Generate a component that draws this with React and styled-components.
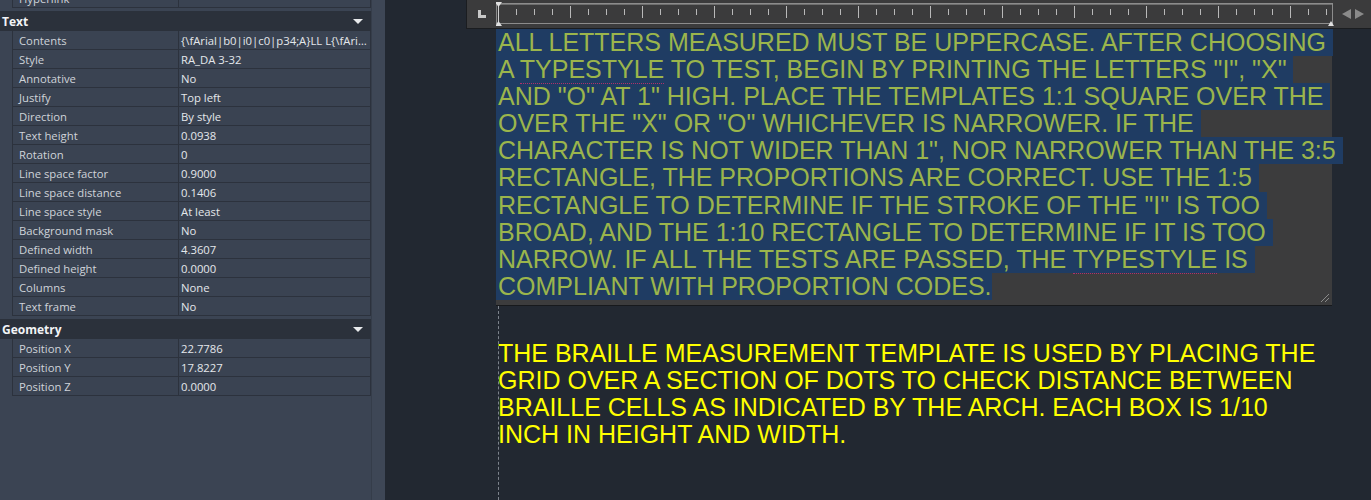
import styled, { createGlobalStyle } from "styled-components";

const Global = createGlobalStyle`
  html, body { margin: 0; padding: 0; background: #222831; }
  body { font-family: "Open Sans", "Noto Sans", sans-serif; }
`;

const Screen = styled.div`
  display: flex;
  width: 1371px;
  height: 500px;
  overflow: hidden;
  background: #222831;
`;

const Palette = styled.div`
  display: flex;
  width: 385px;
  flex-shrink: 0;
  background: #3b4453;
`;

const Grid = styled.div`
  width: 372px;
  margin-top: -11px;
  display: flex;
  flex-direction: column;
`;

const Strip = styled.div`
  width: 13px;
  background: #3e4756;
  border-left: 1px solid #353d4a;
`;

const Header = styled.div`
  display: flex;
  align-items: center;
  justify-content: space-between;
  height: 20px;
  margin-top: 3px;
  padding: 0 8px 0 2px;
  background: #2b313b;
  color: #f2f4f6;
  font-size: 12px;
  font-weight: 700;
`;

const Caret = styled.span`
  width: 0;
  height: 0;
  border-left: 5px solid transparent;
  border-right: 5px solid transparent;
  border-top: 5px solid #e8eaec;
`;

const Rows = styled.div`
  margin-left: 12px;
  border-left: 1px solid #2c323d;
`;

const Row = styled.div`
  display: grid;
  grid-template-columns: 166px 1fr;
  height: 19px;
  border-bottom: 1px solid #2c323d;
  border-right: 1px solid #2c323d;
  box-sizing: border-box;
  background: #3a4352;
  font-size: 11.3px;
  line-height: 16px;
`;

const Name = styled.div`
  padding: 2px 0 0 6px;
  color: #cfd3d9;
  border-right: 1px solid #2c323d;
  white-space: nowrap;
  overflow: hidden;
`;

const Value = styled.div`
  padding: 2px 0 0 2px;
  color: #e4e7eb;
  white-space: nowrap;
  overflow: hidden;
  text-overflow: ellipsis;
`;

const Canvas = styled.div`
  flex: 1;
  padding-left: 81px;
  display: flex;
  flex-direction: column;
`;

const Ruler = styled.div`
  display: flex;
  align-items: center;
  height: 28px;
  background: #3b3b3c;
  border-bottom: 1px solid #1b1d20;
  border-left: 1px solid #1b1d20;
`;

const TabStop = styled.div`
  width: 29px;
  display: flex;
  justify-content: center;
`;

const Arrows = styled.div`
  flex: 1;
  display: flex;
  justify-content: center;
  gap: 1px;
`;

const Editor = styled.div`
  margin-left: 30px;
  width: 836px;
  height: 277px;
  box-sizing: border-box;
  padding: 0 0 0 2px;
  background: #3c3c3d;
  border-bottom: 1px solid #17191c;
  position: relative;
  font-family: "Liberation Sans", Arial, sans-serif;
  font-size: 25px;
  line-height: 27.1px;
  color: #9bb54c;
`;

const Sel = styled.div`
  width: fit-content;
  background: #1f3c63;
  white-space: pre;
  margin-left: -2px;
  padding-left: 2px;
`;

const Misspelt = styled.span`
  border-bottom: 1px dotted #b0306a;
`;

const Grip = styled.svg`
  position: absolute;
  right: 2px;
  bottom: 2px;
`;

const Guide = styled.div`
  flex: 1;
  margin-left: 32px;
  border-left: 1px dashed #7d838c;
  padding-top: 34px;
`;

const Note = styled.div`
  margin-left: -1px;
  font-family: "Liberation Sans", Arial, sans-serif;
  font-size: 25px;
  line-height: 27px;
  color: #ffff00;
  white-space: pre;
`;

const textProps = [
  ["Contents", "{\\fArial|b0|i0|c0|p34;A}LL L{\\fArial|b0|i0|c0|p34;E}TTERS"],
  ["Style", "RA_DA 3-32"],
  ["Annotative", "No"],
  ["Justify", "Top left"],
  ["Direction", "By style"],
  ["Text height", "0.0938"],
  ["Rotation", "0"],
  ["Line space factor", "0.9000"],
  ["Line space distance", "0.1406"],
  ["Line space style", "At least"],
  ["Background mask", "No"],
  ["Defined width", "4.3607"],
  ["Defined height", "0.0000"],
  ["Columns", "None"],
  ["Text frame", "No"],
];

const geomProps = [
  ["Position X", "22.7786"],
  ["Position Y", "17.8227"],
  ["Position Z", "0.0000"],
];

const lines = [
  "ALL LETTERS MEASURED MUST BE UPPERCASE. AFTER CHOOSING ",
  null,
  "AND \"O\" AT 1\" HIGH. PLACE THE TEMPLATES 1:1 SQUARE OVER THE ",
  "OVER THE \"X\" OR \"O\" WHICHEVER IS NARROWER. IF THE ",
  "CHARACTER IS NOT WIDER THAN 1\", NOR NARROWER THAN THE 3:5 ",
  "RECTANGLE, THE PROPORTIONS ARE CORRECT. USE THE 1:5 ",
  "RECTANGLE TO DETERMINE IF THE STROKE OF THE \"I\" IS TOO ",
  "BROAD, AND THE 1:10 RECTANGLE TO DETERMINE IF IT IS TOO ",
  null,
  "COMPLIANT WITH PROPORTION CODES.",
];

const note = [
  "THE BRAILLE MEASUREMENT TEMPLATE IS USED BY PLACING THE",
  "GRID OVER A SECTION OF DOTS TO CHECK DISTANCE BETWEEN",
  "BRAILLE CELLS AS INDICATED BY THE ARCH. EACH BOX IS 1/10",
  "INCH IN HEIGHT AND WIDTH.",
];

const Props = ({ items }) => (
  <Rows>
    {items.map(([n, v]) => (
      <Row key={n}>
        <Name>{n}</Name>
        <Value>{v}</Value>
      </Row>
    ))}
  </Rows>
);

const RulerScale = () => {
  const ticks = [];
  for (let k = 1; k < 47; k++) {
    const x = 2 + k * 18;
    const major = k % 4 === 0;
    ticks.push(
      <line key={k} x1={x + 0.5} x2={x + 0.5} y1={major ? 6 : 9} y2={major ? 18 : 15} stroke="#b9b9b9" strokeWidth="1" />
    );
  }
  return (
    <svg width="838" height="28" style={{ display: "block" }}>
      <rect x="0.5" y="3.5" width="836" height="20" fill="none" stroke="#8c8c8c" />
      <line x1="1" x2="836" y1="4.5" y2="4.5" stroke="#6e6e6e" />
      {ticks}
      <line x1="2.5" x2="2.5" y1="4" y2="24" stroke="#d0d0d0" />
      <polygon points="-1,2 6,2 2.5,7" fill="#e0e0e0" />
      <polygon points="-1,26 6,26 2.5,21" fill="#e0e0e0" />
      <polygon points="832,26 838,26 835,21" fill="#e0e0e0" />
    </svg>
  );
};

export default function App() {
  return (
    <>
      <Global />
      <Screen>
        <Palette>
          <Grid>
            <Rows>
              <Row>
                <Name>Hyperlink</Name>
                <Value />
              </Row>
            </Rows>
            <Header>
              Text
              <Caret />
            </Header>
            <Props items={textProps} />
            <Header>
              Geometry
              <Caret />
            </Header>
            <Props items={geomProps} />
          </Grid>
          <Strip />
        </Palette>
        <Canvas>
          <Ruler>
            <TabStop>
              <svg width="10" height="10">
                <path d="M1 1 V9 H9 V6 H4 V1 Z" fill="#c8c8c8" />
              </svg>
            </TabStop>
            <RulerScale />
            <Arrows>
              <svg width="24" height="12">
                <polygon points="1,6 10,1 10,11" fill="#8a8a8a" />
                <polygon points="23,6 14,1 14,11" fill="#8a8a8a" />
              </svg>
            </Arrows>
          </Ruler>
          <Editor>
            {lines.map((l, i) => {
              if (i === 1)
                return (
                  <Sel key={i}>
                    A <Misspelt>TYPESTYLE</Misspelt> TO TEST, BEGIN BY PRINTING THE LETTERS "I", "X"{" "}
                  </Sel>
                );
              if (i === 8)
                return (
                  <Sel key={i}>
                    NARROW. IF ALL THE TESTS ARE PASSED, THE <Misspelt>TYPESTYLE</Misspelt> IS{" "}
                  </Sel>
                );
              return <Sel key={i}>{l}</Sel>;
            })}
            <Grip width="10" height="10">
              <line x1="1" y1="9" x2="9" y2="1" stroke="#8a8a8a" />
              <line x1="5" y1="9" x2="9" y2="5" stroke="#8a8a8a" />
            </Grip>
          </Editor>
          <Guide>
            {note.map((n) => (
              <Note key={n}>{n}</Note>
            ))}
          </Guide>
        </Canvas>
      </Screen>
    </>
  );
}
